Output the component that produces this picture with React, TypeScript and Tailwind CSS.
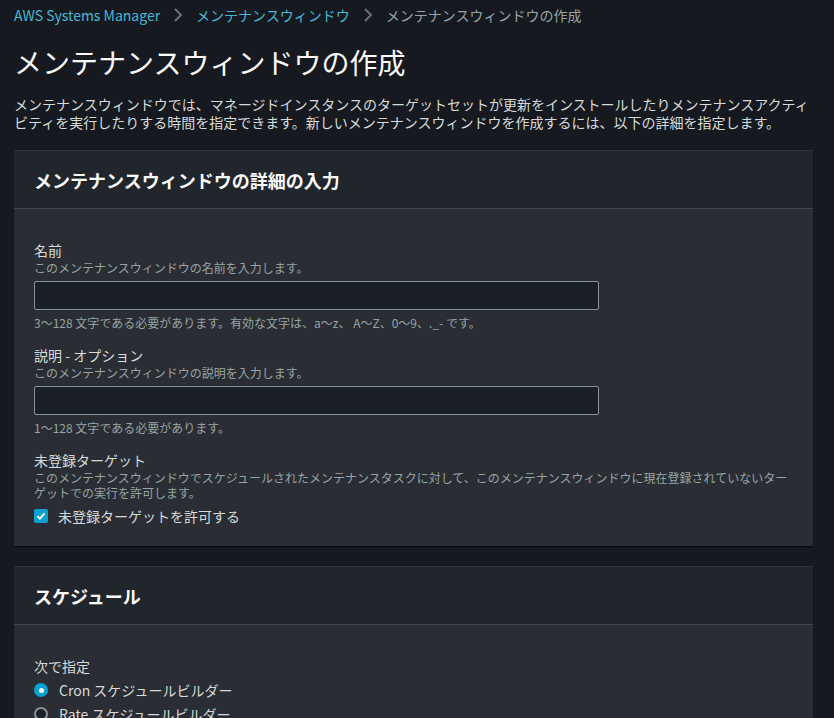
import React from "react";

const FONT = { fontFamily: '"Noto Sans CJK JP", "Noto Sans", sans-serif' };

const Chevron = () => (
  <svg width="10" height="16" viewBox="0 0 10 16" className="shrink-0">
    <path d="M2 2l6 6-6 6" fill="none" stroke="#687078" strokeWidth="2" />
  </svg>
);

const Field = ({
  label,
  desc,
  hint,
}: {
  label: string;
  desc: string;
  hint: string;
}) => (
  <div className="flex flex-col">
    <div className="text-[14px] leading-[20px] text-[#d5dbdb]">{label}</div>
    <div className="text-[12px] leading-[16px] text-[#95a5a6]">{desc}</div>
    <div className="mt-[5px] h-[29px] w-[565px] rounded-[2px] border border-[#879596] bg-[#1a1f28]" />
    <div className="mt-[5px] text-[12px] leading-[16px] text-[#95a5a6]">{hint}</div>
  </div>
);

const Card = ({ title, children }: { title: string; children: React.ReactNode }) => (
  <section className="border-t border-[#2e3239] bg-[#2a2d33] shadow-[0_1px_1px_0_rgba(0,0,0,0.6)]">
    <div className="flex h-[58px] items-center border-b border-[#414750] bg-[#21252c] px-[20px]">
      <h2 className="text-[18px] font-bold leading-[24px] text-[#fafafa]">{title}</h2>
    </div>
    <div className="px-[20px] pt-[31px] pb-[20px]">{children}</div>
  </section>
);

const Radio = ({ checked, label }: { checked?: boolean; label: string }) => (
  <div className="flex h-[20px] items-center gap-[11px]">
    {checked ? (
      <span className="flex h-[14px] w-[14px] items-center justify-center rounded-full bg-[#0aa1d2]">
        <span className="h-[5px] w-[5px] rounded-full bg-white" />
      </span>
    ) : (
      <span className="h-[14px] w-[14px] rounded-full border-2 border-[#879596] bg-[#1a1f28]" />
    )}
    <span className="text-[14px] leading-[20px] text-[#d5dbdb]">{label}</span>
  </div>
);

export default function App() {
  return (
    <div style={FONT} className="min-h-screen overflow-hidden bg-[#16191f] pl-[14px] pr-[21px]">
      {/* breadcrumb */}
      <nav className="flex items-center pt-[5px] text-[14px] leading-[20px]">
        <span className="text-[#44b9d6]">AWS Systems Manager</span>
        <span className="mx-[13px] flex items-center"><Chevron /></span>
        <span className="text-[#44b9d6]">メンテナンスウィンドウ</span>
        <span className="mx-[13px] flex items-center"><Chevron /></span>
        <span className="text-[#95a5a6]">メンテナンスウィンドウの作成</span>
      </nav>

      <h1 className="mt-[19px] text-[28px] font-normal leading-[36px] text-[#fafafa]">
        メンテナンスウィンドウの作成
      </h1>
      <p className="mt-[15px] text-[14px] leading-[18px] text-[#d5dbdb]">
        メンテナンスウィンドウでは、マネージドインスタンスのターゲットセットが更新をインストールしたりメンテナンスアクティビティを実行したりする時間を指定できます。新しいメンテナンスウィンドウを作成するには、以下の詳細を指定します。
      </p>

      <div className="mt-[19px] flex flex-col gap-[20px]">
        <Card title="メンテナンスウィンドウの詳細の入力">
          <div className="flex flex-col gap-[14px]">
            <Field
              label="名前"
              desc="このメンテナンスウィンドウの名前を入力します。"
              hint="3〜128 文字である必要があります。有効な文字は、a〜z、 A〜Z、0〜9、._- です。"
            />
            <Field
              label="説明 - オプション"
              desc="このメンテナンスウィンドウの説明を入力します。"
              hint="1〜128 文字である必要があります。"
            />
            <div className="flex flex-col">
              <div className="text-[14px] leading-[20px] text-[#d5dbdb]">未登録ターゲット</div>
              <div className="text-[12px] leading-[15px] text-[#95a5a6]">
                このメンテナンスウィンドウでスケジュールされたメンテナンスタスクに対して、このメンテナンスウィンドウに現在登録されていないターゲットでの実行を許可します。
              </div>
              <label className="mt-[6px] flex h-[20px] items-center gap-[10px]">
                <span className="flex h-[14px] w-[14px] items-center justify-center rounded-[2px] bg-[#0aa1d2]">
                  <svg width="10" height="10" viewBox="0 0 10 10">
                    <path d="M1.5 5.2l2.4 2.4L8.6 2.4" fill="none" stroke="#fff" strokeWidth="1.8" />
                  </svg>
                </span>
                <span className="text-[14px] leading-[20px] text-[#d5dbdb]">未登録ターゲットを許可する</span>
              </label>
            </div>
          </div>
        </Card>

        <Card title="スケジュール">
          <div className="text-[14px] leading-[20px] text-[#d5dbdb]">次で指定</div>
          <div className="mt-[4px] flex flex-col gap-[4px]">
            <Radio checked label="Cron スケジュールビルダー" />
            <Radio label="Rate スケジュールビルダー" />
          </div>
          <div className="h-[200px]" />
        </Card>
      </div>
    </div>
  );
}
